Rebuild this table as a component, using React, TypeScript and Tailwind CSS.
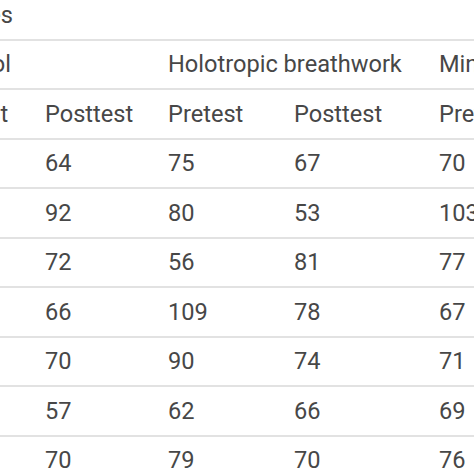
const rows = [
  ["68", "64", "75", "67", "70", "72"],
  ["88", "92", "80", "53", "103", "81"],
  ["70", "72", "56", "81", "77", "70"],
  ["64", "66", "109", "78", "67", "65"],
  ["73", "70", "90", "74", "71", "69"],
  ["59", "57", "62", "66", "69", "64"],
  ["71", "70", "79", "70", "76", "73"],
];

const cols = ["w-[112px]", "w-[123px]", "w-[126px]", "w-[145px]", "w-[110px]", "w-[110px]"];

function Row({ cells }: { cells: string[] }) {
  return (
    <div className="flex h-[49.5px] border-b-2 border-[#e2e2e2]">
      {cells.map((c, i) => (
        <div key={i} className={`${cols[i]} shrink-0 flex items-center`}>
          {c}
        </div>
      ))}
    </div>
  );
}

export default function App() {
  return (
    <div
      className="w-[474px] h-[474px] overflow-hidden bg-white text-[23.6px] leading-[28px] text-[#474747]"
      style={{ fontFamily: "Roboto, 'Liberation Sans', sans-serif" }}
    >
      <div className="h-[40.5px] border-b-2 border-[#e2e2e2] pt-px">
        <div className="w-[13px] flex justify-end whitespace-nowrap">
          Pretest and posttest scores
        </div>
      </div>
      <div className="ml-[-67px] w-[740px]">
        <div className="flex h-[49.5px] border-b-2 border-[#e2e2e2]">
          <div className="w-[235px] shrink-0 flex items-center">
            <div className="w-[78px] flex justify-end whitespace-nowrap">Control</div>
          </div>
          <div className="w-[271px] shrink-0 flex items-center whitespace-nowrap">
            Holotropic breathwork
          </div>
          <div className="w-[220px] shrink-0 flex items-center whitespace-nowrap">
            Mindfulness
          </div>
        </div>
        <Row cells={["Pretest", "Posttest", "Pretest", "Posttest", "Pretest", "Posttest"]} />
        {rows.map((r, i) => (
          <Row key={i} cells={r} />
        ))}
      </div>
    </div>
  );
}
